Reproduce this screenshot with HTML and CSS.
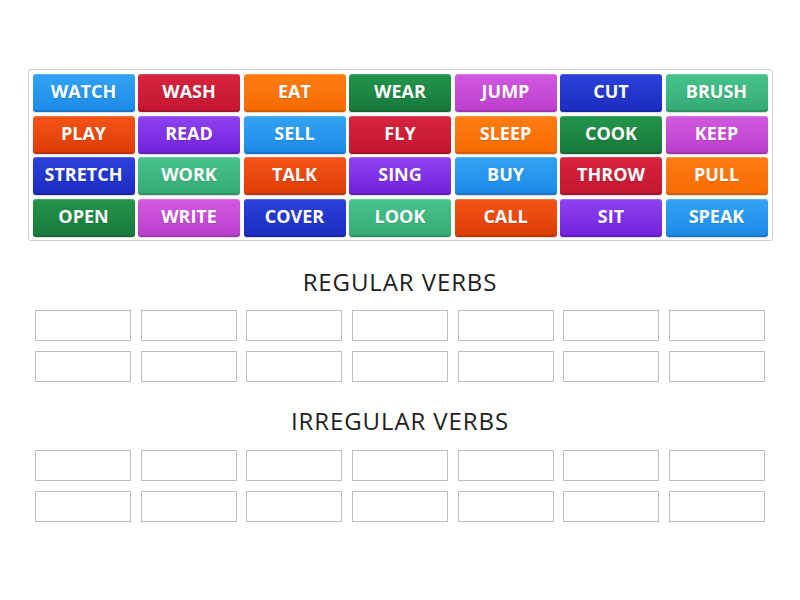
FILE: index.html
```html
<!DOCTYPE html>
<html>
<head>
<meta charset="utf-8">
<link rel="stylesheet" href="styles.css">
</head>
<body>
<div class="page">
  <div class="bank">
    <div class="tile c-blue">WATCH</div>
    <div class="tile c-crimson">WASH</div>
    <div class="tile c-orange">EAT</div>
    <div class="tile c-dgreen">WEAR</div>
    <div class="tile c-pink">JUMP</div>
    <div class="tile c-navy">CUT</div>
    <div class="tile c-mint">BRUSH</div>

    <div class="tile c-red">PLAY</div>
    <div class="tile c-purple">READ</div>
    <div class="tile c-blue">SELL</div>
    <div class="tile c-crimson">FLY</div>
    <div class="tile c-orange">SLEEP</div>
    <div class="tile c-dgreen">COOK</div>
    <div class="tile c-pink">KEEP</div>

    <div class="tile c-navy">STRETCH</div>
    <div class="tile c-mint">WORK</div>
    <div class="tile c-red">TALK</div>
    <div class="tile c-purple">SING</div>
    <div class="tile c-blue">BUY</div>
    <div class="tile c-crimson">THROW</div>
    <div class="tile c-orange">PULL</div>

    <div class="tile c-dgreen">OPEN</div>
    <div class="tile c-pink">WRITE</div>
    <div class="tile c-navy">COVER</div>
    <div class="tile c-mint">LOOK</div>
    <div class="tile c-red">CALL</div>
    <div class="tile c-purple">SIT</div>
    <div class="tile c-blue">SPEAK</div>
  </div>

  <h2 class="group-title first">REGULAR VERBS</h2>
  <div class="slots">
    <div class="slot"></div><div class="slot"></div><div class="slot"></div><div class="slot"></div><div class="slot"></div><div class="slot"></div><div class="slot"></div>
    <div class="slot"></div><div class="slot"></div><div class="slot"></div><div class="slot"></div><div class="slot"></div><div class="slot"></div><div class="slot"></div>
  </div>

  <h2 class="group-title second">IRREGULAR VERBS</h2>
  <div class="slots">
    <div class="slot"></div><div class="slot"></div><div class="slot"></div><div class="slot"></div><div class="slot"></div><div class="slot"></div><div class="slot"></div>
    <div class="slot"></div><div class="slot"></div><div class="slot"></div><div class="slot"></div><div class="slot"></div><div class="slot"></div><div class="slot"></div>
  </div>
</div>
</body>
</html>
```

FILE: styles.css
```css
html, body {
  margin: 0;
  padding: 0;
  background: #ffffff;
}

body {
  font-family: "Open Sans", "Liberation Sans", sans-serif;
}

.page {
  width: 800px;
  padding-top: 69px;
  display: flex;
  flex-direction: column;
  align-items: center;
}

.bank {
  box-sizing: border-box;
  width: 745px;
  height: 172px;
  border: 1px solid #cfcfcf;
  border-radius: 3px;
  padding: 4px;
  display: grid;
  grid-template-columns: repeat(7, 102px);
  grid-template-rows: repeat(4, 38px);
  column-gap: 3.5px;
  row-gap: 3.67px;
}

.tile {
  border-radius: 3px;
  color: #ffffff;
  font-weight: 700;
  font-size: 18px;
  line-height: 35px;
  text-align: center;
  white-space: nowrap;
  box-shadow: inset 0 -2px 0 rgba(0, 0, 0, 0.14), inset 0 1px 0 rgba(255, 255, 255, 0.18), 0 1px 1px rgba(0, 0, 0, 0.15);
  text-shadow: 0 1px 1px rgba(0, 0, 0, 0.12);
}

.c-blue    { background: linear-gradient(#33a3f5, #1a8ae6); }
.c-crimson { background: linear-gradient(#d8243f, #c2162f); }
.c-orange  { background: linear-gradient(#ff7d14, #f56b00); }
.c-dgreen  { background: linear-gradient(#23954b, #17783a); }
.c-pink    { background: linear-gradient(#d15ae0, #bb3ecd); }
.c-navy    { background: linear-gradient(#2c42da, #1b2cc0); }
.c-mint    { background: linear-gradient(#48c38d, #35aa73); }
.c-red     { background: linear-gradient(#f55317, #dc3c05); }
.c-purple  { background: linear-gradient(#8f42f2, #7121d9); }

.group-title {
  margin: 0;
  font-weight: 400;
  font-size: 24px;
  line-height: 32px;
  letter-spacing: 0.9px;
  color: #1e1e1e;
  text-align: center;
}

.group-title.first {
  margin-top: 25px;
  margin-bottom: 12px;
}

.group-title.second {
  margin-top: 23px;
  margin-bottom: 13px;
}

.slots {
  width: 730px;
  display: grid;
  grid-template-columns: repeat(7, 96px);
  grid-template-rows: repeat(2, 31px);
  column-gap: 9.67px;
  row-gap: 10px;
}

.slot {
  box-sizing: border-box;
  border: 1px solid #bdbdbd;
  background: #ffffff;
}
```
